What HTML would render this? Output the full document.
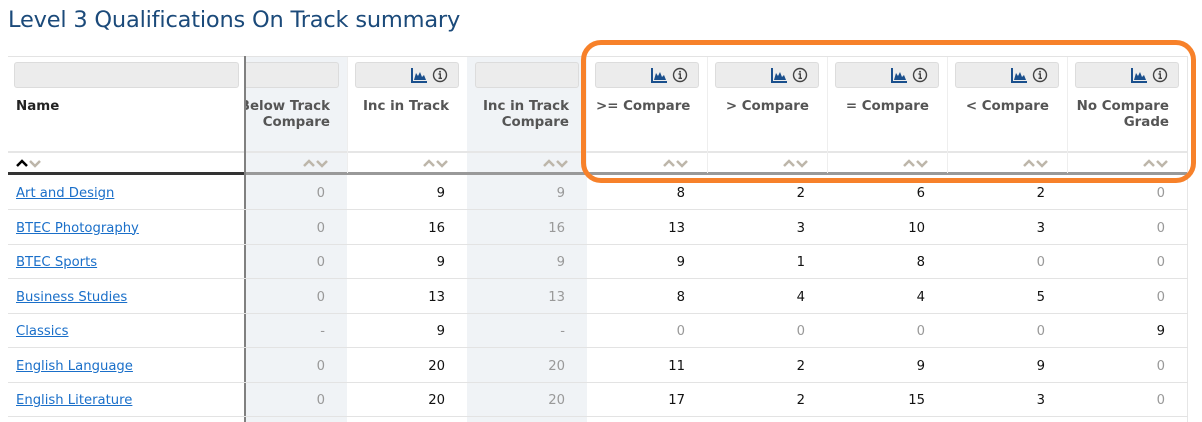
<!DOCTYPE html><html><head><style>
body{margin:0;width:1202px;height:422px;overflow:hidden;background:#fff;font-family:"DejaVu Sans","Liberation Sans",sans-serif;position:relative}
h1{position:absolute;left:8px;top:7px;margin:0;font-weight:normal;font-size:22.5px;color:#1b4a7a;letter-spacing:-0.2px;white-space:nowrap}
.c{position:absolute;box-sizing:border-box}
.sh{background:#f0f3f6}
.fb{position:absolute;top:62px;height:26px;background:#ececec;border:1px solid #dcdcdc;border-radius:3px;box-sizing:border-box}
.hd{position:absolute;top:99px;font-weight:bold;font-size:13.4px;color:#555;text-align:right;line-height:16px;white-space:nowrap}
.ic{position:absolute;top:67px}
.num{position:absolute;font-size:13.2px;text-align:right;width:40px}
a{position:absolute;left:16px;color:#1a6fc9;font-size:13.2px;text-decoration:underline;white-space:nowrap}
.rl{position:absolute;left:8px;width:1180px;height:1px;background:#e3e3e3}
</style></head><body>
<h1>Level 3 Qualifications On Track summary</h1>
<div class="c" style="left:8px;top:56px;width:1180px;height:1px;background:#e3e3e3"></div>
<div class="c sh" style="left:246px;top:57px;width:101px;height:365px"></div>
<div class="c sh" style="left:467px;top:57px;width:120px;height:365px"></div>
<div class="c" style="left:8px;top:151px;width:1180px;height:2px;background:#e6e6e6"></div>
<div class="c" style="left:8px;top:172px;width:237px;height:3px;background:#333"></div>
<div class="c" style="left:245px;top:172px;width:943px;height:3px;background:#999"></div>
<div class="c" style="left:244px;top:56px;width:2px;height:366px;background:#808080"></div>
<div class="c" style="left:347px;top:57px;width:1px;height:116px;background:#eee"></div>
<div class="c" style="left:707px;top:57px;width:1px;height:116px;background:#eee"></div>
<div class="c" style="left:827px;top:57px;width:1px;height:116px;background:#eee"></div>
<div class="c" style="left:947px;top:57px;width:1px;height:116px;background:#eee"></div>
<div class="c" style="left:1067px;top:57px;width:1px;height:116px;background:#eee"></div>
<div class="c" style="left:1187px;top:57px;width:1px;height:365px;background:#e6e6e6"></div>

<div class="fb" style="left:14px;width:225px"></div>
<div class="fb" style="left:246px;width:93px;border-left:none;border-radius:0 3px 3px 0"></div>
<div class="fb" style="left:355px;width:104px"></div>
<div class="fb" style="left:475px;width:104px"></div>
<div class="fb" style="left:595px;width:104px"></div>
<div class="fb" style="left:715px;width:104px"></div>
<div class="fb" style="left:835px;width:104px"></div>
<div class="fb" style="left:955px;width:104px"></div>
<div class="fb" style="left:1075px;width:104px"></div>

<svg width="0" height="0" style="position:absolute"><defs>
<g id="ico"><path d="M1 1V15H16" stroke="#1a4f8c" stroke-width="2" fill="none"/><path d="M3 13L5 6 7 9 9 5 11 10 13 8 15 13Z" fill="#1a4f8c"/><circle cx="29" cy="8" r="6.5" stroke="#444" stroke-width="1.4" fill="none"/><circle cx="29" cy="4.8" r="1" fill="#444"/><path d="M27.5 7H29.3V11.2M27.5 11.3H31" stroke="#444" stroke-width="1.4" fill="none"/></g>
<g id="sr"><path d="M1 8L6 3 11 8" stroke="#bdb6aa" stroke-width="2.5" fill="none"/><path d="M14 3L19 8 24 3" stroke="#bdb6aa" stroke-width="2.5" fill="none"/></g></defs></svg>
<svg class="ic" style="left:411px" width="40" height="17"><use href="#ico"/></svg>
<svg class="ic" style="left:651px" width="40" height="17"><use href="#ico"/></svg>
<svg class="ic" style="left:771px" width="40" height="17"><use href="#ico"/></svg>
<svg class="ic" style="left:891px" width="40" height="17"><use href="#ico"/></svg>
<svg class="ic" style="left:1011px" width="40" height="17"><use href="#ico"/></svg>
<svg class="ic" style="left:1131px" width="40" height="17"><use href="#ico"/></svg>

<div class="hd" style="left:16px;color:#222;text-align:left">Name</div>
<div class="hd" style="left:246px;width:84px;overflow:hidden"><div style="position:absolute;right:0;top:0;text-align:right">Below Track<br>Compare</div>&nbsp;<br>&nbsp;</div>
<div class="hd" style="left:349px;width:100px">Inc in Track</div>
<div class="hd" style="left:465px;width:104px">Inc in Track<br>Compare</div>
<div class="hd" style="left:596px;width:104px;text-align:left">&gt;= Compare</div>
<div class="hd" style="left:705px;width:104px">&gt; Compare</div>
<div class="hd" style="left:825px;width:104px">= Compare</div>
<div class="hd" style="left:945px;width:104px">&lt; Compare</div>
<div class="hd" style="left:1060px;width:109px">No Compare<br>Grade</div>

<svg style="position:absolute;left:16px;top:158px" width="30" height="12"><path d="M1 8L6 3 11 8" stroke="#000" stroke-width="2.5" fill="none"/><path d="M14 3L19 8 24 3" stroke="#bdb6aa" stroke-width="2.5" fill="none"/></svg>
<svg style="position:absolute;left:303px;top:158px" width="30" height="12"><use href="#sr"/></svg>
<svg style="position:absolute;left:423px;top:158px" width="30" height="12"><use href="#sr"/></svg>
<svg style="position:absolute;left:543px;top:158px" width="30" height="12"><use href="#sr"/></svg>
<svg style="position:absolute;left:663px;top:158px" width="30" height="12"><use href="#sr"/></svg>
<svg style="position:absolute;left:783px;top:158px" width="30" height="12"><use href="#sr"/></svg>
<svg style="position:absolute;left:903px;top:158px" width="30" height="12"><use href="#sr"/></svg>
<svg style="position:absolute;left:1023px;top:158px" width="30" height="12"><use href="#sr"/></svg>
<svg style="position:absolute;left:1143px;top:158px" width="30" height="12"><use href="#sr"/></svg>

<div id="rows"></div>
<script>
var data=[["Art and Design","0","9","9","8","2","6","2","0"],["BTEC Photography","0","16","16","13","3","10","3","0"],["BTEC Sports","0","9","9","9","1","8","0","0"],["Business Studies","0","13","13","8","4","4","5","0"],["Classics","-","9","-","0","0","0","0","9"],["English Language","0","20","20","11","2","9","9","0"],["English Literature","0","20","20","17","2","15","3","0"]];
var rights=[325,445,565,685,805,925,1045,1165];
var h="";
data.forEach(function(r,i){var y=186+i*34.5;
h+='<a style="top:'+y+'px">'+r[0]+'</a>';
for(var j=1;j<9;j++){var v=r[j];var g;
if(j==1||j==3)g=true;else if(j==2)g=false;else g=(v=="0");
h+='<div class="num" style="top:'+y+'px;left:'+(rights[j-1]-40)+'px;color:'+(g?'#999':'#111')+'">'+v+'</div>';}
h+='<div class="rl" style="top:'+(y+23)+'px"></div>';});
document.getElementById('rows').innerHTML=h;
</script>
<div class="c" style="left:581px;top:40px;width:615px;height:143px;border:5px solid #f7812a;border-radius:20px"></div>
</body></html>
